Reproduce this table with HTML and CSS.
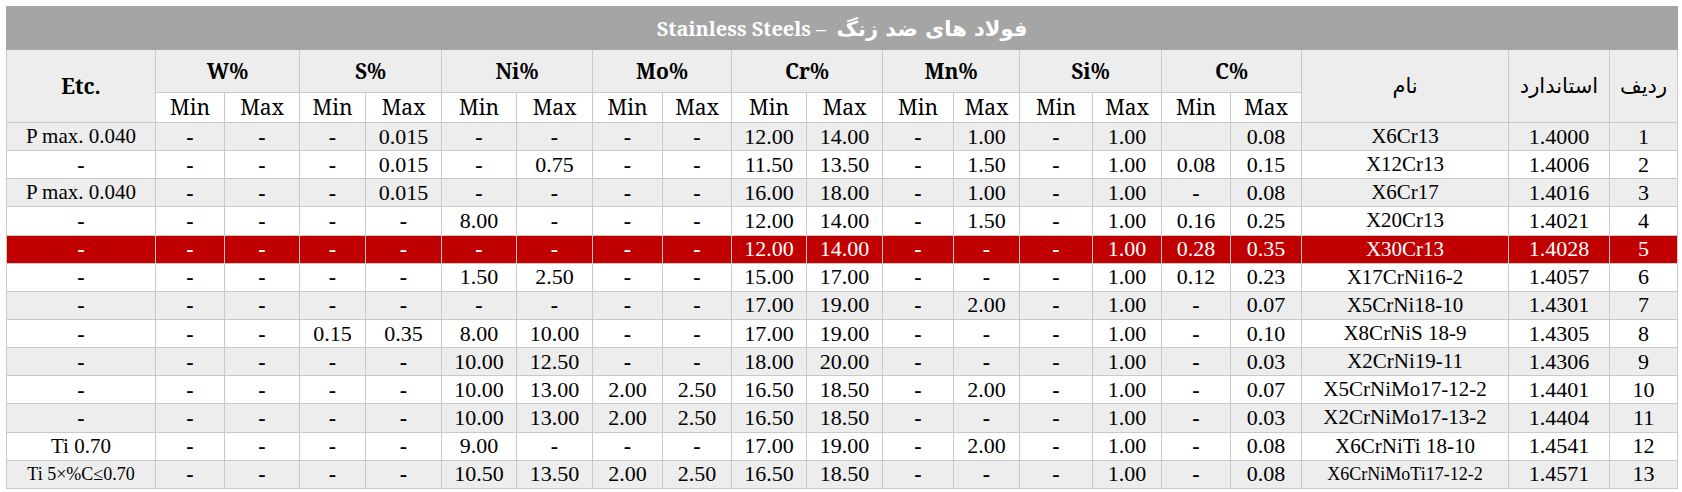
FILE: index.html
```html
<!DOCTYPE html>
<html lang="en">
<head>
<meta charset="utf-8">
<title>Stainless Steels</title>
<link rel="stylesheet" href="styles.css">
</head>
<body>
<table class="steel">
<colgroup>
<col class="c-etc"><col class="c69"><col class="c75"><col class="c66"><col class="c76"><col class="c75"><col class="c76"><col class="c70"><col class="c69"><col class="c75"><col class="c76"><col class="c71"><col class="c66"><col class="c73"><col class="c69"><col class="c69"><col class="c71"><col class="c-name"><col class="c-std"><col class="c-row">
</colgroup>
<thead>
<tr class="title-row"><th colspan="20" class="title">Stainless Steels –&nbsp;&nbsp;<span class="fa-title" lang="fa" dir="rtl">فولاد های ضد زنگ</span></th></tr>
<tr class="head1">
<th rowspan="2" class="h-bold">Etc.</th>
<th colspan="2" class="h-bold">W%</th>
<th colspan="2" class="h-bold">S%</th>
<th colspan="2" class="h-bold">Ni%</th>
<th colspan="2" class="h-bold">Mo%</th>
<th colspan="2" class="h-bold">Cr%</th>
<th colspan="2" class="h-bold">Mn%</th>
<th colspan="2" class="h-bold">Si%</th>
<th colspan="2" class="h-bold">C%</th>
<th rowspan="2" class="h-fa" lang="fa" dir="rtl">نام</th>
<th rowspan="2" class="h-fa" lang="fa" dir="rtl">استاندارد</th>
<th rowspan="2" class="h-fa" lang="fa" dir="rtl">ردیف</th>
</tr>
<tr class="head2">
<th>Min</th><th>Max</th><th>Min</th><th>Max</th><th>Min</th><th>Max</th><th>Min</th><th>Max</th><th>Min</th><th>Max</th><th>Min</th><th>Max</th><th>Min</th><th>Max</th><th>Min</th><th>Max</th>
</tr>
</thead>
<tbody>
<tr class="odd"><td class="etc">P max. 0.040</td><td class="d">-</td><td class="d">-</td><td class="d">-</td><td>0.015</td><td class="d">-</td><td class="d">-</td><td class="d">-</td><td class="d">-</td><td>12.00</td><td>14.00</td><td class="d">-</td><td>1.00</td><td class="d">-</td><td>1.00</td><td></td><td>0.08</td><td class="name">X6Cr13</td><td>1.4000</td><td>1</td></tr>
<tr><td class="d">-</td><td class="d">-</td><td class="d">-</td><td class="d">-</td><td>0.015</td><td class="d">-</td><td>0.75</td><td class="d">-</td><td class="d">-</td><td>11.50</td><td>13.50</td><td class="d">-</td><td>1.50</td><td class="d">-</td><td>1.00</td><td>0.08</td><td>0.15</td><td class="name">X12Cr13</td><td>1.4006</td><td>2</td></tr>
<tr class="odd"><td class="etc">P max. 0.040</td><td class="d">-</td><td class="d">-</td><td class="d">-</td><td>0.015</td><td class="d">-</td><td class="d">-</td><td class="d">-</td><td class="d">-</td><td>16.00</td><td>18.00</td><td class="d">-</td><td>1.00</td><td class="d">-</td><td>1.00</td><td class="d">-</td><td>0.08</td><td class="name">X6Cr17</td><td>1.4016</td><td>3</td></tr>
<tr><td class="d">-</td><td class="d">-</td><td class="d">-</td><td class="d">-</td><td class="d">-</td><td>8.00</td><td class="d">-</td><td class="d">-</td><td class="d">-</td><td>12.00</td><td>14.00</td><td class="d">-</td><td>1.50</td><td class="d">-</td><td>1.00</td><td>0.16</td><td>0.25</td><td class="name">X20Cr13</td><td>1.4021</td><td>4</td></tr>
<tr class="hl"><td class="d">-</td><td class="d">-</td><td class="d">-</td><td class="d">-</td><td class="d">-</td><td class="d">-</td><td class="d">-</td><td class="d">-</td><td class="d">-</td><td>12.00</td><td>14.00</td><td class="d">-</td><td class="d">-</td><td class="d">-</td><td>1.00</td><td>0.28</td><td>0.35</td><td class="name">X30Cr13</td><td>1.4028</td><td>5</td></tr>
<tr><td class="d">-</td><td class="d">-</td><td class="d">-</td><td class="d">-</td><td class="d">-</td><td>1.50</td><td>2.50</td><td class="d">-</td><td class="d">-</td><td>15.00</td><td>17.00</td><td class="d">-</td><td class="d">-</td><td class="d">-</td><td>1.00</td><td>0.12</td><td>0.23</td><td class="name">X17CrNi16-2</td><td>1.4057</td><td>6</td></tr>
<tr class="odd"><td class="d">-</td><td class="d">-</td><td class="d">-</td><td class="d">-</td><td class="d">-</td><td class="d">-</td><td class="d">-</td><td class="d">-</td><td class="d">-</td><td>17.00</td><td>19.00</td><td class="d">-</td><td>2.00</td><td class="d">-</td><td>1.00</td><td class="d">-</td><td>0.07</td><td class="name">X5CrNi18-10</td><td>1.4301</td><td>7</td></tr>
<tr><td class="d">-</td><td class="d">-</td><td class="d">-</td><td>0.15</td><td>0.35</td><td>8.00</td><td>10.00</td><td class="d">-</td><td class="d">-</td><td>17.00</td><td>19.00</td><td class="d">-</td><td class="d">-</td><td class="d">-</td><td>1.00</td><td class="d">-</td><td>0.10</td><td class="name">X8CrNiS 18-9</td><td>1.4305</td><td>8</td></tr>
<tr class="odd"><td class="d">-</td><td class="d">-</td><td class="d">-</td><td class="d">-</td><td class="d">-</td><td>10.00</td><td>12.50</td><td class="d">-</td><td class="d">-</td><td>18.00</td><td>20.00</td><td class="d">-</td><td class="d">-</td><td class="d">-</td><td>1.00</td><td class="d">-</td><td>0.03</td><td class="name">X2CrNi19-11</td><td>1.4306</td><td>9</td></tr>
<tr><td class="d">-</td><td class="d">-</td><td class="d">-</td><td class="d">-</td><td class="d">-</td><td>10.00</td><td>13.00</td><td>2.00</td><td>2.50</td><td>16.50</td><td>18.50</td><td class="d">-</td><td>2.00</td><td class="d">-</td><td>1.00</td><td class="d">-</td><td>0.07</td><td class="name">X5CrNiMo17-12-2</td><td>1.4401</td><td>10</td></tr>
<tr class="odd"><td class="d">-</td><td class="d">-</td><td class="d">-</td><td class="d">-</td><td class="d">-</td><td>10.00</td><td>13.00</td><td>2.00</td><td>2.50</td><td>16.50</td><td>18.50</td><td class="d">-</td><td class="d">-</td><td class="d">-</td><td>1.00</td><td class="d">-</td><td>0.03</td><td class="name">X2CrNiMo17-13-2</td><td>1.4404</td><td>11</td></tr>
<tr><td class="etc">Ti 0.70</td><td class="d">-</td><td class="d">-</td><td class="d">-</td><td class="d">-</td><td>9.00</td><td class="d">-</td><td class="d">-</td><td class="d">-</td><td>17.00</td><td>19.00</td><td class="d">-</td><td>2.00</td><td class="d">-</td><td>1.00</td><td class="d">-</td><td>0.08</td><td class="name">X6CrNiTi 18-10</td><td>1.4541</td><td>12</td></tr>
<tr class="odd"><td class="etc small">Ti 5×%C≤0.70</td><td class="d">-</td><td class="d">-</td><td class="d">-</td><td class="d">-</td><td>10.50</td><td>13.50</td><td>2.00</td><td>2.50</td><td>16.50</td><td>18.50</td><td class="d">-</td><td class="d">-</td><td class="d">-</td><td>1.00</td><td class="d">-</td><td>0.08</td><td class="name small">X6CrNiMoTi17-12-2</td><td>1.4571</td><td>13</td></tr>
</tbody>
</table>
</body>
</html>
```
FILE: styles.css
```css
html, body {
  margin: 0;
  padding: 0;
  background: #ffffff;
}
body {
  padding: 6px;
  font-family: "Liberation Serif", "Times New Roman", serif;
  color: #000;
}
.steel {
  border-collapse: collapse;
  table-layout: fixed;
  width: 1671px;
}
.c-etc { width: 149px; }
.c66 { width: 66px; }
.c69 { width: 69px; }
.c70 { width: 70px; }
.c71 { width: 71px; }
.c73 { width: 73px; }
.c75 { width: 75px; }
.c76 { width: 76px; }
.c-name { width: 207px; }
.c-std { width: 101px; }
.c-row { width: 68px; }

.steel th,
.steel td {
  border: 1px solid #c9c9c9;
  padding: 0;
  text-align: center;
  vertical-align: middle;
  white-space: nowrap;
  overflow: hidden;
}
.steel th {
  font-family: "Noto Serif", "Liberation Serif", serif;
}
.title-row { height: 43px; }
.steel .title {
  background: #a5a5a5;
  color: #ffffff;
  font-size: 20px;
  font-weight: bold;
  border-color: #a5a5a5;
}
.fa-title {
  font-family: "DejaVu Sans", sans-serif;
  font-size: 21px;
  font-weight: bold;
}
.head1 { height: 43px; }
.head1 th {
  background: #ededed;
}
.steel .h-bold {
  font-size: 21px;
  font-weight: bold;
}
.steel .h-fa {
  font-family: "DejaVu Sans", sans-serif;
  font-size: 21px;
  font-weight: normal;
}
.head2 { height: 30px; }
.head2 th {
  background: #ffffff;
  font-size: 21px;
  font-weight: normal;
  line-height: 1;
}
.steel tbody tr {
  height: 28.15px;
  background: #ffffff;
}
.steel tbody tr.odd { background: #ededed; }
.steel tbody tr.hl {
  background: #c00000;
  color: #ffffff;
}
.steel td {
  font-size: 22px;
  line-height: 1;
}
.steel td.d { font-weight: bold; }
.steel td.etc { font-size: 21px; }
.steel td.name { font-size: 21px; }
.steel td.small { font-size: 18px; }
```
